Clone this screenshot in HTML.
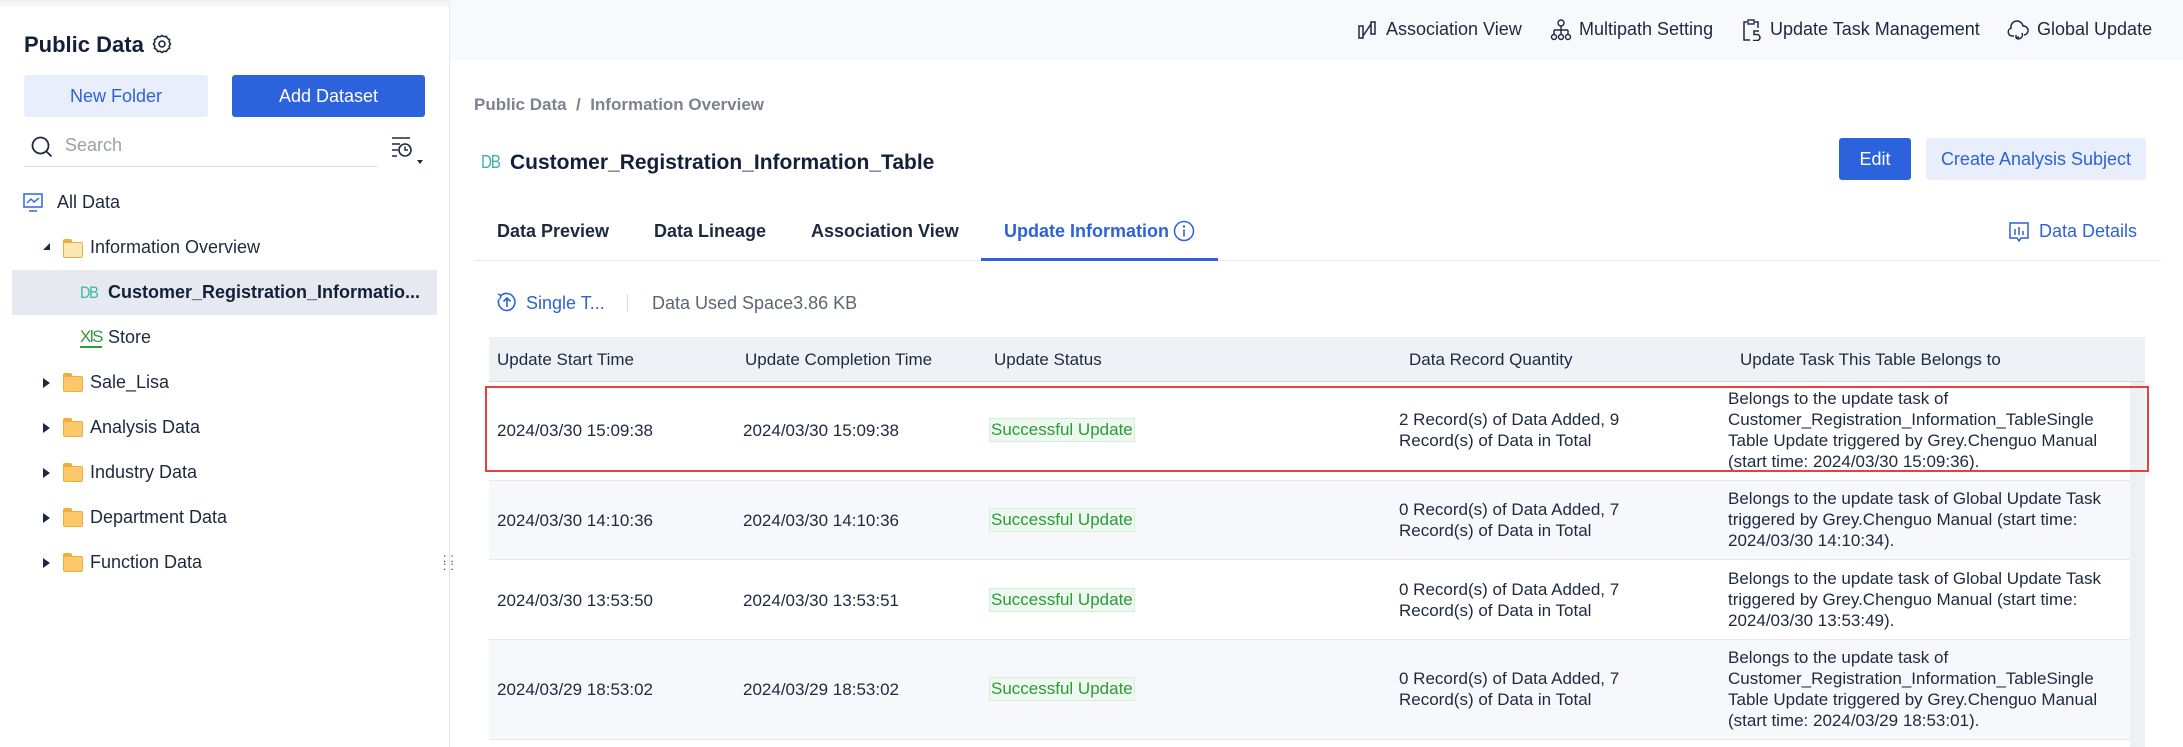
<!DOCTYPE html>
<html><head><meta charset="utf-8"><style>
*{margin:0;padding:0;box-sizing:border-box}
body{width:2183px;height:747px;overflow:hidden;background:#fff;font-family:"Liberation Sans",Arial,sans-serif;color:#1d2a3e;position:relative}
.a{position:absolute;white-space:nowrap}
.t{font-size:18px}
.fold{position:absolute;width:20px;height:16px;background:#fcc869;border:1px solid #f0ad3a;border-radius:2px}
.fold:before{content:"";position:absolute;left:-1px;top:-4px;width:9px;height:4px;background:#f0ad3a;border-radius:2px 2px 0 0}
.tri{position:absolute;width:0;height:0;border-top:5px solid transparent;border-bottom:5px solid transparent;border-left:7px solid #1d2a3e}
.cell{position:absolute;font-size:17px;line-height:21px;color:#1d2a3e;white-space:nowrap}
.ok{position:absolute;font-size:17px;color:#2c9a37;background:#edf8ee;border:1px solid #d6efd8;padding:1px 1px;line-height:20px}
</style></head><body>
<div class="a" style="left:0;top:0;width:2183px;height:8px;background:linear-gradient(#eceef2,#fff0)"></div>
<div class="a" style="left:450px;top:0;width:1733px;height:60px;background:#f7f9fc"></div>
<div class="a" style="left:449px;top:0;width:1px;height:747px;background:#e6e8ec"></div>

<div class="a" style="left:24px;top:32px;font-size:22px;font-weight:bold;color:#14203a">Public Data</div>
<svg class="a" style="left:152px;top:34px" width="20" height="20" viewBox="0 0 20 20"><path d="M10 1.5l2 1.2 2.3-.3 1.2 2 2 1.2-.3 2.3L18.5 10l-1.3 2 .3 2.3-2 1.2-1.2 2-2.3-.3-2 1.3-2-1.3-2.3.3-1.2-2-2-1.2.3-2.3L1.5 10l1.3-2-.3-2.3 2-1.2 1.2-2 2.3.3z" fill="none" stroke="#1d2a3e" stroke-width="1.6"/><circle cx="10" cy="10" r="3" fill="none" stroke="#1d2a3e" stroke-width="1.6"/></svg>

<div class="a" style="left:24px;top:75px;width:184px;height:42px;background:#e8eefb;border-radius:3px;color:#2d62d9;font-size:18px;text-align:center;line-height:42px">New Folder</div>
<div class="a" style="left:232px;top:75px;width:193px;height:42px;background:#2c62db;border-radius:3px;color:#fff;font-size:18px;text-align:center;line-height:42px">Add Dataset</div>

<svg class="a" style="left:31px;top:136px" width="22" height="22" viewBox="0 0 22 22"><circle cx="9.5" cy="9.5" r="8" fill="none" stroke="#1d2a3e" stroke-width="1.8"/><path d="M15.5 15.5l5 5" stroke="#1d2a3e" stroke-width="1.8"/></svg>
<div class="a" style="left:65px;top:135px;font-size:18px;color:#9aa0aa">Search</div>
<div class="a" style="left:24px;top:166px;width:353px;height:1px;background:#d9dce2"></div>
<svg class="a" style="left:390px;top:136px" width="34" height="30" viewBox="0 0 34 30"><path d="M2 2h18M2 8h8M2 14h6M2 20h5" stroke="#1d2a3e" stroke-width="1.6"/><circle cx="15" cy="14" r="6" fill="none" stroke="#1d2a3e" stroke-width="1.6"/><path d="M15 10.5V14h3" stroke="#1d2a3e" stroke-width="1.5" fill="none"/><path d="M27 24h6l-3 4z" fill="#1d2a3e"/></svg>

<svg class="a" style="left:23px;top:193px" width="20" height="20" viewBox="0 0 20 20"><rect x="1" y="1" width="18" height="13" fill="none" stroke="#3d6de0" stroke-width="1.6"/><path d="M4 10l4-4 3 3 5-4" fill="none" stroke="#3d6de0" stroke-width="1.5"/><path d="M6 18h8" stroke="#3d6de0" stroke-width="1.6"/></svg>
<div class="a t" style="left:57px;top:192px">All Data</div>

<div class="a" style="left:43px;top:243px;width:0;height:0;border-left:7px solid transparent;border-bottom:7px solid #1d2a3e"></div>
<div class="fold" style="left:63px;top:242px;background:#fde7b5"></div>
<div class="a t" style="left:90px;top:237px">Information Overview</div>

<div class="a" style="left:12px;top:270px;width:425px;height:45px;background:#e6e9f0"></div>
<div class="a" style="left:80px;top:283px;font-size:17px;color:#3cb4a6;letter-spacing:-1.5px;transform:scaleX(.85);transform-origin:left">DB</div>
<div class="a t" style="left:108px;top:282px;font-weight:bold;color:#14203a">Customer_Registration_Informatio...</div>

<div class="a" style="left:80px;top:327px;font-size:17px;color:#2f9b3c;border-bottom:2px solid #2f9b3c;line-height:19px;letter-spacing:-1.5px">XlS</div>
<div class="a t" style="left:108px;top:327px">Store</div>

<div class="tri" style="left:43px;top:378px"></div><div class="fold" style="left:63px;top:376px"></div><div class="a t" style="left:90px;top:372px">Sale_Lisa</div>
<div class="tri" style="left:43px;top:423px"></div><div class="fold" style="left:63px;top:421px"></div><div class="a t" style="left:90px;top:417px">Analysis Data</div>
<div class="tri" style="left:43px;top:468px"></div><div class="fold" style="left:63px;top:466px"></div><div class="a t" style="left:90px;top:462px">Industry Data</div>
<div class="tri" style="left:43px;top:513px"></div><div class="fold" style="left:63px;top:511px"></div><div class="a t" style="left:90px;top:507px">Department Data</div>
<div class="tri" style="left:43px;top:558px"></div><div class="fold" style="left:63px;top:556px"></div><div class="a t" style="left:90px;top:552px">Function Data</div>
<div class="a" style="left:443px;top:554px;font-size:12px;line-height:8px;letter-spacing:4px;color:#333">::<br>::</div>

<svg class="a" style="left:1358px;top:20px" width="20" height="20" viewBox="0 0 20 20"><rect x="1" y="6" width="4" height="12" fill="none" stroke="#1d2a3e" stroke-width="1.5"/><rect x="13" y="2" width="4" height="12" fill="none" stroke="#1d2a3e" stroke-width="1.5"/><path d="M5 16L13 4" stroke="#1d2a3e" stroke-width="1.5"/></svg>
<div class="a" style="left:1386px;top:19px;font-size:18px">Association View</div>
<svg class="a" style="left:1550px;top:19px" width="22" height="22" viewBox="0 0 22 22"><circle cx="11" cy="4" r="3" fill="none" stroke="#1d2a3e" stroke-width="1.4"/><path d="M11 7v4M4 11h14M4 11v4M11 11v4M18 11v4" stroke="#1d2a3e" stroke-width="1.4" fill="none"/><circle cx="4" cy="18" r="2.5" fill="none" stroke="#1d2a3e" stroke-width="1.4"/><circle cx="11" cy="18" r="2.5" fill="none" stroke="#1d2a3e" stroke-width="1.4"/><circle cx="18" cy="18" r="2.5" fill="none" stroke="#1d2a3e" stroke-width="1.4"/></svg>
<div class="a" style="left:1579px;top:19px;font-size:18px">Multipath Setting</div>
<svg class="a" style="left:1743px;top:19px" width="20" height="22" viewBox="0 0 20 22"><path d="M4 3H1v18h6M12 3h3v6" fill="none" stroke="#1d2a3e" stroke-width="1.5"/><rect x="5" y="1" width="6" height="4" fill="none" stroke="#1d2a3e" stroke-width="1.4"/><path d="M16 12h-5v3.5h3a3 3 0 010 6h-4" fill="none" stroke="#1d2a3e" stroke-width="1.5"/></svg>
<div class="a" style="left:1770px;top:19px;font-size:18px">Update Task Management</div>
<svg class="a" style="left:2007px;top:19px" width="22" height="22" viewBox="0 0 22 22"><path d="M7 17H5a4 4 0 01-1-7.8A6 6 0 0116 7a4.5 4.5 0 011 9" fill="none" stroke="#1d2a3e" stroke-width="1.5"/><path d="M15 14a4 4 0 01-6 5M9 19l3-1M9 19l0-3" fill="none" stroke="#1d2a3e" stroke-width="1.5"/></svg>
<div class="a" style="left:2037px;top:19px;font-size:18px">Global Update</div>

<div class="a" style="left:474px;top:95px;font-size:17px;font-weight:bold;color:#7b8290">Public Data&nbsp;&nbsp;/&nbsp;&nbsp;Information Overview</div>
<div class="a" style="left:481px;top:152px;font-size:18px;color:#3cb4a6;letter-spacing:-1.5px;transform:scaleX(.85);transform-origin:left">DB</div>
<div class="a" style="left:510px;top:151px;font-size:21px;font-weight:bold;color:#14203a">Customer_Registration_Information_Table</div>
<div class="a" style="left:1839px;top:138px;width:72px;height:42px;background:#2c62db;border-radius:3px;color:#fff;font-size:18px;text-align:center;line-height:42px">Edit</div>
<div class="a" style="left:1926px;top:138px;width:220px;height:42px;background:#e8eefb;border-radius:3px;color:#2d62d9;font-size:18px;text-align:center;line-height:42px">Create Analysis Subject</div>

<div class="a" style="left:497px;top:221px;font-size:18px;font-weight:bold">Data Preview</div>
<div class="a" style="left:654px;top:221px;font-size:18px;font-weight:bold">Data Lineage</div>
<div class="a" style="left:811px;top:221px;font-size:18px;font-weight:bold">Association View</div>
<div class="a" style="left:1004px;top:221px;font-size:18px;font-weight:bold;color:#2d62d9">Update Information</div>
<svg class="a" style="left:1173px;top:220px" width="22" height="22" viewBox="0 0 22 22"><circle cx="11" cy="11" r="9.5" fill="none" stroke="#2d62d9" stroke-width="1.5"/><circle cx="11" cy="6.5" r="1.2" fill="#2d62d9"/><path d="M11 9.5v7" stroke="#2d62d9" stroke-width="1.6"/></svg>
<div class="a" style="left:474px;top:260px;width:1687px;height:1px;background:#e6e8ec"></div>
<div class="a" style="left:981px;top:258px;width:237px;height:3px;background:#2d62d9"></div>
<svg class="a" style="left:2008px;top:221px" width="22" height="22" viewBox="0 0 22 22"><path d="M2 2h18v15H13l-2 3-2-3H2z" fill="none" stroke="#2d62d9" stroke-width="1.5"/><path d="M7 8v6M11 6v8M15 10v4" stroke="#2d62d9" stroke-width="1.5"/></svg>
<div class="a" style="left:2039px;top:221px;font-size:18px;color:#2d62d9">Data Details</div>

<svg class="a" style="left:496px;top:291px" width="22" height="22" viewBox="0 0 22 22"><path d="M5 4.5A8.5 8.5 0 1111 19.5 8.5 8.5 0 013 8" fill="none" stroke="#2d62d9" stroke-width="1.6"/><path d="M2 3l3 1.5L4 8" fill="none" stroke="#2d62d9" stroke-width="1.5"/><path d="M11 16V7M7.5 10.5L11 7l3.5 3.5" fill="none" stroke="#2d62d9" stroke-width="1.6"/></svg>
<div class="a" style="left:526px;top:293px;font-size:18px;color:#2d62d9">Single T...</div>
<div class="a" style="left:627px;top:294px;width:1px;height:18px;background:#dadde3"></div>
<div class="a" style="left:652px;top:293px;font-size:18px;color:#5d6573">Data Used Space3.86 KB</div>

<div class="a" style="left:489px;top:337px;width:1656px;height:45px;background:#eef1f6;border-bottom:1px solid #d3d7de"></div>
<div class="a" style="left:2130px;top:382px;width:15px;height:365px;background:#eef0f4"></div>
<div class="cell" style="left:497px;top:349px">Update Start Time</div>
<div class="cell" style="left:745px;top:349px">Update Completion Time</div>
<div class="cell" style="left:994px;top:349px">Update Status</div>
<div class="cell" style="left:1409px;top:349px">Data Record Quantity</div>
<div class="cell" style="left:1740px;top:349px">Update Task This Table Belongs to</div>

<div class="a" style="left:489px;top:480px;width:1641px;height:80px;background:#f7f8fb;border-top:1px solid #e3e6eb;border-bottom:1px solid #e3e6eb"></div>
<div class="a" style="left:489px;top:639px;width:1641px;height:101px;background:#f7f8fb;border-top:1px solid #e3e6eb;border-bottom:1px solid #e3e6eb"></div>

<div class="cell" style="left:497px;top:420px">2024/03/30 15:09:38</div>
<div class="cell" style="left:743px;top:420px">2024/03/30 15:09:38</div>
<div class="ok" style="left:989px;top:418px">Successful Update</div>
<div class="cell" style="left:1399px;top:409px">2 Record(s) of Data Added, 9<br>Record(s) of Data in Total</div>
<div class="cell" style="left:1728px;top:388px">Belongs to the update task of<br>Customer_Registration_Information_TableSingle<br>Table Update triggered by Grey.Chenguo Manual<br>(start time: 2024/03/30 15:09:36).</div>
<div class="a" style="left:485px;top:386px;width:1664px;height:86px;border:2px solid #ea3f3f"></div>

<div class="cell" style="left:497px;top:510px">2024/03/30 14:10:36</div>
<div class="cell" style="left:743px;top:510px">2024/03/30 14:10:36</div>
<div class="ok" style="left:989px;top:508px">Successful Update</div>
<div class="cell" style="left:1399px;top:499px">0 Record(s) of Data Added, 7<br>Record(s) of Data in Total</div>
<div class="cell" style="left:1728px;top:488px">Belongs to the update task of Global Update Task<br>triggered by Grey.Chenguo Manual (start time:<br>2024/03/30 14:10:34).</div>

<div class="cell" style="left:497px;top:590px">2024/03/30 13:53:50</div>
<div class="cell" style="left:743px;top:590px">2024/03/30 13:53:51</div>
<div class="ok" style="left:989px;top:588px">Successful Update</div>
<div class="cell" style="left:1399px;top:579px">0 Record(s) of Data Added, 7<br>Record(s) of Data in Total</div>
<div class="cell" style="left:1728px;top:568px">Belongs to the update task of Global Update Task<br>triggered by Grey.Chenguo Manual (start time:<br>2024/03/30 13:53:49).</div>

<div class="cell" style="left:497px;top:679px">2024/03/29 18:53:02</div>
<div class="cell" style="left:743px;top:679px">2024/03/29 18:53:02</div>
<div class="ok" style="left:989px;top:677px">Successful Update</div>
<div class="cell" style="left:1399px;top:668px">0 Record(s) of Data Added, 7<br>Record(s) of Data in Total</div>
<div class="cell" style="left:1728px;top:647px">Belongs to the update task of<br>Customer_Registration_Information_TableSingle<br>Table Update triggered by Grey.Chenguo Manual<br>(start time: 2024/03/29 18:53:01).</div>
</body></html>
